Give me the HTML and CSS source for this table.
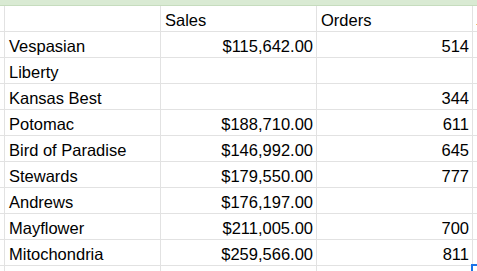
FILE: index.html
```html
<!DOCTYPE html>
<html>
<head>
<meta charset="utf-8">
<link rel="stylesheet" href="styles.css">
</head>
<body>
<div class="sheet">
  <div class="topbar"></div>
  <div class="grid">
    <div class="c gut"></div><div class="c">&nbsp;</div><div class="c">Sales</div><div class="c">Orders</div><div class="c edge"><span class="speck"></span></div>

    <div class="c gut"></div><div class="c">Vespasian</div><div class="c num">$115,642.00</div><div class="c num">514</div><div class="c edge"></div>
    <div class="c gut"></div><div class="c">Liberty</div><div class="c num"></div><div class="c num"></div><div class="c edge"></div>
    <div class="c gut"></div><div class="c">Kansas Best</div><div class="c num"></div><div class="c num">344</div><div class="c edge"></div>
    <div class="c gut"></div><div class="c">Potomac</div><div class="c num">$188,710.00</div><div class="c num">611</div><div class="c edge"></div>
    <div class="c gut"></div><div class="c">Bird of Paradise</div><div class="c num">$146,992.00</div><div class="c num">645</div><div class="c edge"></div>
    <div class="c gut"></div><div class="c">Stewards</div><div class="c num">$179,550.00</div><div class="c num">777</div><div class="c edge"></div>
    <div class="c gut"></div><div class="c">Andrews</div><div class="c num">$176,197.00</div><div class="c num"></div><div class="c edge"></div>
    <div class="c gut"></div><div class="c">Mayflower</div><div class="c num">$211,005.00</div><div class="c num">700</div><div class="c edge"></div>
    <div class="c gut"></div><div class="c">Mitochondria</div><div class="c num">$259,566.00</div><div class="c num">811</div><div class="c edge"></div>
    <div class="c gut"></div><div class="c"></div><div class="c"></div><div class="c"></div><div class="c edge"></div>
  </div>
  <div class="handle"></div>
</div>
</body>
</html>
```

FILE: styles.css
```css
html, body {
  margin: 0;
  padding: 0;
  background: #ffffff;
}
body {
  font-family: "Liberation Sans", Arial, sans-serif;
  font-size: 16.5px;
  color: #000000;
  overflow: hidden;
}
.sheet {
  position: relative;
  width: 477px;
  height: 271px;
  overflow: hidden;
}
.topbar {
  height: 5px;
  background: #d9ead3;
  border-bottom: 1px solid #c6dcbe;
}
.grid {
  display: grid;
  grid-template-columns: 4px 156px 156px 156px 1fr;
  grid-auto-rows: 26px;
}
.c {
  box-sizing: border-box;
  border-bottom: 1px solid #e2e2e2;
  border-left: 1px solid #e2e2e2;
  padding: 3px 3px 0 4px;
  line-height: 22px;
  white-space: nowrap;
  overflow: hidden;
}
.c.gut {
  border-left: none;
  padding: 0;
}
.c.num {
  text-align: right;
}
.c.edge {
  padding: 0;
}
.speck {
  display: block;
  width: 1px;
  height: 1px;
  margin: 18px 0 0 3px;
  background: #f2c46d;
}
.handle {
  position: absolute;
  left: 471px;
  top: 264px;
  width: 10px;
  height: 10px;
  border-top: 2px solid #1a73e8;
  border-left: 2px solid #1a73e8;
}
```
